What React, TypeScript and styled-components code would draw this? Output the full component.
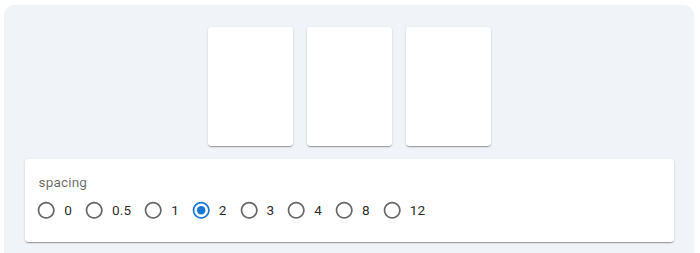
import { FC, useState } from 'react';
import styled, { createGlobalStyle } from 'styled-components';

const GlobalStyle = createGlobalStyle`
  html, body {
    margin: 0;
    padding: 0;
    background: #ffffff;
    font-family: Roboto, "Liberation Sans", sans-serif;
  }
`;

const Frame = styled.div`
  margin: 5px 6px 0 4px;
  padding: 22px 20px 20px 21px;
  min-height: 260px;
  box-sizing: border-box;
  background: #f0f4f8;
  border-radius: 10px;
`;

const PaperRow = styled.div`
  display: flex;
  justify-content: center;
  gap: 13.6px;
`;

const Tile = styled.div`
  width: 85px;
  height: 119px;
  background: #ffffff;
  border-radius: 3.4px;
  box-shadow: 0px 2px 1px -1px rgba(0, 0, 0, 0.2), 0px 1px 1px 0px rgba(0, 0, 0, 0.14), 0px 1px 3px 0px rgba(0, 0, 0, 0.12);
`;

const Card = styled.div`
  margin-top: 13px;
  padding: 14px 13.6px 13.6px;
  background: #ffffff;
  border-radius: 3.4px;
  box-shadow: 0px 2px 1px -1px rgba(0, 0, 0, 0.2), 0px 1px 1px 0px rgba(0, 0, 0, 0.14), 0px 1px 3px 0px rgba(0, 0, 0, 0.12);
`;

const Legend = styled.div`
  font-size: 13.6px;
  line-height: 19.55px;
  color: rgba(0, 0, 0, 0.6);
  letter-spacing: 0.13px;
`;

const RadioRow = styled.div`
  display: flex;
  align-items: center;
  margin-left: -2.4px;
`;

const Option = styled.label`
  display: inline-flex;
  align-items: center;
  margin-right: 11.9px;
  cursor: pointer;
  font-size: 13.6px;
  line-height: 20px;
  color: rgba(0, 0, 0, 0.87);
  letter-spacing: 0.13px;
`;

const IconBox = styled.span<{ $checked: boolean }>`
  display: inline-flex;
  padding: 7.65px 0;
  margin-right: 7.65px;
  color: ${p => (p.$checked ? '#1976d2' : 'rgba(0, 0, 0, 0.6)')};

  svg {
    width: 20.4px;
    height: 20.4px;
    display: block;
  }
`;

const RadioIcon: FC<{ checked: boolean }> = ({ checked }) => (
  <svg viewBox="0 0 24 24" fill="currentColor">
    <path d="M12 2C6.48 2 2 6.48 2 12s4.48 10 10 10 10-4.48 10-10S17.52 2 12 2zm0 18c-4.42 0-8-3.58-8-8s3.58-8 8-8 8 3.58 8 8-3.58 8-8 8z" />
    {checked && <circle cx="12" cy="12" r="5" />}
  </svg>
);

const values = ['0', '0.5', '1', '2', '3', '4', '8', '12'];

export default function App() {
  const [spacing, setSpacing] = useState('2');

  return (
    <>
      <GlobalStyle />
      <Frame>
        <PaperRow>
          <Tile />
          <Tile />
          <Tile />
        </PaperRow>
        <Card>
          <Legend>spacing</Legend>
          <RadioRow>
            {values.map(v => (
              <Option key={v} onClick={() => setSpacing(v)}>
                <IconBox $checked={spacing === v}>
                  <RadioIcon checked={spacing === v} />
                </IconBox>
                {v}
              </Option>
            ))}
          </RadioRow>
        </Card>
      </Frame>
    </>
  );
}
